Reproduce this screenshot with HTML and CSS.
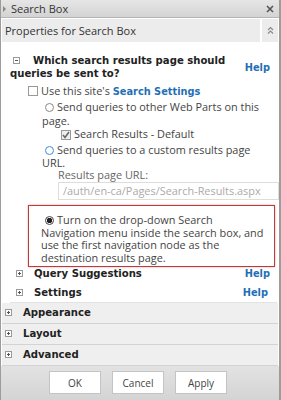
FILE: index.html
```html
<!DOCTYPE html>
<html lang="en">
<head>
    <meta charset="UTF-8">
    <title>Search Box</title>
    <link rel="stylesheet" href="styles.css">
</head>
<body>
    <div class="panel">
        <div class="titlebar">
            <span class="arrow"></span>
            <span class="title">Search Box</span>
            <svg class="close" width="8" height="8" viewBox="0 0 8 8">
                <path d="M1 1 L7 7 M7 1 L1 7" stroke="#555" stroke-width="1.6"/>
            </svg>
        </div>
        <div class="propbar">
            <div class="proptitle">Properties for Search Box</div>
            <div class="collapse">
                <svg width="7" height="9" viewBox="0 0 7 9">
                    <path d="M1 4 L3.5 1.5 L6 4 M1 7.5 L3.5 5 L6 7.5" fill="none" stroke="#888" stroke-width="1.1"/>
                </svg>
            </div>
        </div>

        <div class="content">
            <div class="section open">
                <div class="sechead">
                    <div class="sectitle">
                        <svg class="toggle first" width="7" height="7" viewBox="0 0 7 7"><rect x="0.5" y="0.5" width="6" height="6" fill="#fff" stroke="#999"/><path d="M2 3.5 H5" stroke="#555"/></svg>Which search results page should queries be sent to?
                    </div>
                    <a class="help">Help</a>
                </div>
                <div class="opt site"><span class="check"></span>Use this site's <a class="link">Search Settings</a></div>
                <div class="opt radio r1"><span class="rb"></span>Send queries to other Web Parts on this page.</div>
                <div class="opt sub"><span class="check on"><svg width="8" height="8" viewBox="0 0 8 8"><path d="M1 4 L3 6.5 L7 1" fill="none" stroke="#666" stroke-width="1.5"/></svg></span>Search Results - Default</div>
                <div class="opt radio r2"><span class="rb blue"></span>Send queries to a custom results page URL.</div>
                <div class="urllabel">Results page URL:</div>
                <div class="urlbox">/auth/en-ca/Pages/Search-Results.aspx</div>
                <div class="highlight">
                    <div class="opt radio"><span class="rb sel"></span>Turn on the drop-down Search<br>Navigation menu inside the search box, and<br>use the first navigation node as the<br>destination results page.</div>
                </div>
            </div>
            <div class="section qs">
                <div class="sechead">
                    <div class="sectitle">
                        <svg class="toggle" width="7" height="7" viewBox="0 0 7 7"><rect x="0.5" y="0.5" width="6" height="6" fill="#fff" stroke="#999"/><path d="M2 3.5 H5 M3.5 2 V5" stroke="#555"/></svg>Query Suggestions
                    </div>
                    <a class="help">Help</a>
                </div>
            </div>
            <div class="section last">
                <div class="sechead">
                    <div class="sectitle">
                        <svg class="toggle" width="7" height="7" viewBox="0 0 7 7"><rect x="0.5" y="0.5" width="6" height="6" fill="#fff" stroke="#999"/><path d="M2 3.5 H5 M3.5 2 V5" stroke="#555"/></svg>Settings
                    </div>
                    <a class="help">Help</a>
                </div>
            </div>
        </div>

        <div class="group">
            <svg class="toggle" width="7" height="7" viewBox="0 0 7 7"><rect x="0.5" y="0.5" width="6" height="6" fill="#fff" stroke="#999"/><path d="M2 3.5 H5 M3.5 2 V5" stroke="#555"/></svg>Appearance
        </div>
        <div class="group">
            <svg class="toggle" width="7" height="7" viewBox="0 0 7 7"><rect x="0.5" y="0.5" width="6" height="6" fill="#fff" stroke="#999"/><path d="M2 3.5 H5 M3.5 2 V5" stroke="#555"/></svg>Layout
        </div>
        <div class="group">
            <svg class="toggle" width="7" height="7" viewBox="0 0 7 7"><rect x="0.5" y="0.5" width="6" height="6" fill="#fff" stroke="#999"/><path d="M2 3.5 H5 M3.5 2 V5" stroke="#555"/></svg>Advanced
        </div>

        <div class="footer">
            <button>OK</button>
            <button>Cancel</button>
            <button>Apply</button>
        </div>
    </div>
</body>
</html>
```

FILE: styles.css
```css
body {
    margin: 0;
    font-family: "Open Sans", "Noto Sans", sans-serif;
    font-size: 10.9px;
    color: #444;
    background: #fff;
}

.panel {
    width: 281px;
    height: 400px;
    box-sizing: border-box;
    border-left: 1px solid #9c9c9c;
    border-right: 2px solid #9c9c9c;
    display: flex;
    flex-direction: column;
    overflow: hidden;
}

.titlebar {
    height: 17px;
    flex-shrink: 0;
    display: flex;
    align-items: center;
    background: linear-gradient(#e6e6e6, #d3d3d3);
    border-bottom: 1px solid #b5b5b5;
    padding: 0 5px 0 2px;
    font-size: 11px;
    color: #333;
}

.arrow {
    width: 0;
    height: 0;
    border-top: 3px solid transparent;
    border-bottom: 3px solid transparent;
    border-left: 3px solid #888;
    margin-right: 5px;
}

.title {
    flex: 1;
}

.propbar {
    display: flex;
    flex-shrink: 0;
    gap: 2px;
    padding: 1px 1px 0 1px;
}

.proptitle {
    flex: 1;
    height: 23px;
    line-height: 23px;
    background: #ececec;
    padding-left: 3px;
    font-size: 11px;
    color: #333;
}

.collapse {
    width: 16px;
    background: #ececec;
    display: flex;
    align-items: center;
    justify-content: center;
}

.content {
    padding: 12px 0 0 9px;
}

.sechead {
    display: flex;
    align-items: center;
    padding-right: 9px;
}

.sectitle {
    flex: 1;
    font-family: "DejaVu Sans", sans-serif;
    font-weight: bold;
    font-size: 10.1px;
    line-height: 13px;
    color: #222;
}

.toggle {
    margin: 0 11px 0 6px;
}

.toggle.first {
    margin-left: 3px;
    margin-right: 13px;
}

.help {
    font-family: "DejaVu Sans", sans-serif;
    font-weight: bold;
    font-size: 9.8px;
    color: #1f6fb7;
}

.opt {
    line-height: 14px;
}

.site {
    margin-top: 4px;
    padding-left: 18px;
}

.link {
    font-family: "DejaVu Sans", sans-serif;
    font-weight: bold;
    font-size: 9.8px;
    color: #1f6fb7;
}

.check {
    display: inline-flex;
    align-items: center;
    justify-content: center;
    width: 8px;
    height: 8px;
    border: 1px solid #999;
    margin-right: 3px;
    vertical-align: -1px;
}

.check.on {
    background: #eee;
}

.radio {
    padding-left: 32px;
    padding-right: 10px;
}

.r1 {
    margin-top: 1px;
}

.r2 {
    margin-top: 2px;
    line-height: 13px;
}

.rb {
    display: inline-block;
    width: 7px;
    height: 7px;
    border: 1px solid #888;
    border-radius: 50%;
    margin: 0 3px 0 3px;
    vertical-align: -1px;
}

.rb.blue {
    border-color: #3a8fd8;
}

.rb.sel {
    background: radial-gradient(circle, #222 0 2.5px, #fff 3px);
    border-color: #444;
    margin-left: 4px;
}

.sub {
    margin-top: -1px;
    padding-left: 51px;
}

.urllabel {
    padding-left: 48px;
    line-height: 12px;
    color: #666;
}

.urlbox {
    margin: 1px 0 0 48px;
    height: 16px;
    line-height: 16px;
    border: 1px solid #ddd;
    padding-left: 4px;
    color: #aaa;
    white-space: nowrap;
    overflow: hidden;
}

.highlight {
    margin: 5px 4px 0 18px;
    border: 1px solid #c0393b;
    box-shadow: 0 0 2px rgba(160, 40, 40, 0.4);
    padding: 8px 3px 1px 0;
}

.highlight .radio {
    padding-left: 12px;
    padding-right: 0;
    line-height: 12.7px;
    white-space: nowrap;
}

.section .sechead {
    min-height: 19px;
}

.section.qs {
    margin-top: -3px;
}

.section.last {
    border-bottom: 1px solid #e3e3e3;
    margin-right: 2px;
}

.group {
    height: 20px;
    flex-shrink: 0;
    display: flex;
    align-items: center;
    background: #efefef;
    border-bottom: 1px solid #d3d3d3;
    margin: 0 1px;
    font-family: "DejaVu Sans", sans-serif;
    font-weight: bold;
    font-size: 10.1px;
    color: #222;
}

.group:first-of-type {
    margin-top: 1px;
}

.group .toggle {
    margin: 0 11px 0 3px;
}

.footer {
    flex: 1;
    background: linear-gradient(#e2e2e2, #d4d4d4);
    display: flex;
    justify-content: center;
    align-items: center;
    gap: 11px;
    padding-right: 4px;
}

.footer button {
    width: 52px;
    height: 23px;
    background: #fff;
    border: 1px solid #c4c4c4;
    font-family: "Open Sans", sans-serif;
    font-size: 10px;
    color: #444;
}
```
